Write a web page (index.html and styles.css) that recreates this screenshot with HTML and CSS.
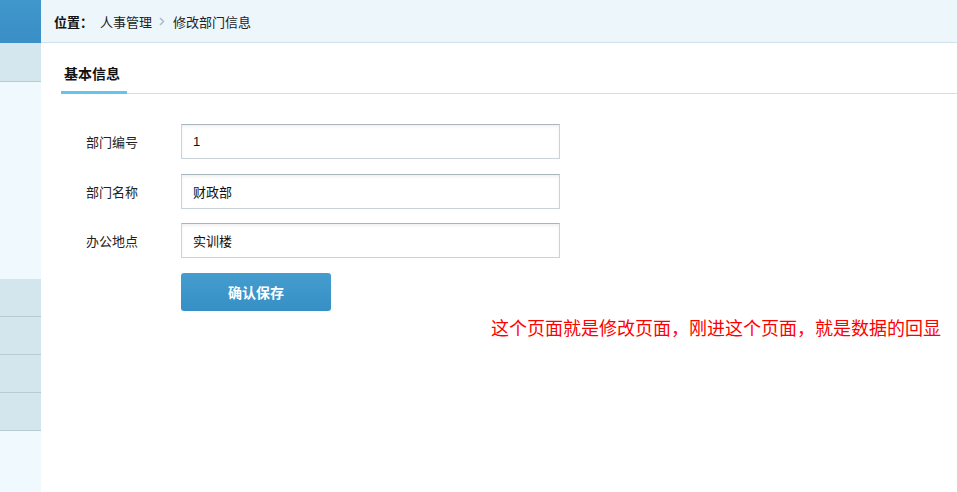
FILE: index.html
```html
<!DOCTYPE html>
<html lang="zh-CN">
<head>
<meta charset="utf-8">
<title>修改部门信息</title>
<link rel="stylesheet" href="styles.css">
</head>
<body>
<div class="page">
  <aside class="sidebar">
    <div class="side-top"></div>
    <div class="side-head"></div>
    <div class="side-space"></div>
    <div class="side-item"></div>
    <div class="side-item"></div>
    <div class="side-item"></div>
    <div class="side-item"></div>
  </aside>
  <main class="main">
    <div class="place">
      <span class="place-label">位置：</span>
      <span class="crumb">人事管理</span>
      <svg class="sep" width="6" height="9" viewBox="0 0 6 9"><path d="M1 1 L4.5 4.5 L1 8" fill="none" stroke="#a9bcc8" stroke-width="1.5"/></svg>
      <span class="crumb">修改部门信息</span>
    </div>
    <div class="tabbar">
      <span class="tab">基本信息</span>
    </div>
    <form class="form">
      <label class="label">部门编号</label>
      <input class="field" type="text" value="1">
      <label class="label">部门名称</label>
      <input class="field" type="text" value="财政部">
      <label class="label">办公地点</label>
      <input class="field" type="text" value="实训楼">
      <span></span>
      <button class="btn" type="button">确认保存</button>
    </form>
    <p class="note">这个页面就是修改页面，刚进这个页面，就是数据的回显</p>
  </main>
</div>
</body>
</html>
```

FILE: styles.css
```css
html, body {
  margin: 0;
  padding: 0;
  background: #fff;
  font-family: "Liberation Sans", Arial, "Noto Sans CJK SC", sans-serif;
  font-size: 13px;
  color: #222;
}
.page {
  display: flex;
  min-height: 492px;
}
.sidebar {
  width: 41px;
  flex: none;
  background: #f0f9fd;
  display: flex;
  flex-direction: column;
}
.side-top {
  height: 43px;
  background: linear-gradient(#3f97cb, #3a8fc6);
}
.side-head {
  height: 38px;
  background: #d4e6ee;
  border-bottom: 1px solid #b9cad3;
}
.side-space {
  height: 197px;
}
.side-item {
  height: 37px;
  background: #d3e6ee;
  border-bottom: 1px solid #b8cad2;
}
.main {
  flex: 1;
  min-width: 0;
}
.place {
  height: 42px;
  background: #ecf6fb;
  border-bottom: 1px solid #d3e2ea;
  display: flex;
  align-items: center;
  padding-left: 13px;
  color: #222;
}
.place-label {
  font-weight: bold;
  color: #111;
  margin-right: 7px;
}
.sep {
  margin: 0 8px 0 7px;
}
.tabbar {
  margin: 0 0 0 20px;
  border-bottom: 1px solid #d5e0e6;
  box-sizing: border-box;
  display: flex;
  align-items: flex-end;
  height: 51px;
}
.tab {
  display: block;
  font-size: 14px;
  font-weight: bold;
  color: #111;
  padding: 0 0 0 3px;
  width: 66px;
  line-height: 18px;
  white-space: nowrap;
  border-bottom: 3px solid #64c5ec;
  margin-bottom: -1px;
  box-sizing: border-box;
  height: 29px;
}
.form {
  display: grid;
  grid-template-columns: 95px 379px;
  row-gap: 14.5px;
  margin: 30px 0 0 45px;
  align-items: center;
}
.label {
  font-size: 13px;
  color: #222;
}
.field {
  height: 35px;
  box-sizing: border-box;
  border: 1px solid #c9d4da;
  border-top-color: #a8b5bc;
  box-shadow: inset 0 2px 3px rgba(0,0,0,0.06);
  padding: 0 11px;
  font-family: "Liberation Sans", Arial, "Noto Sans CJK SC", sans-serif;
  font-size: 13px;
  color: #111;
  margin: 0;
  outline: none;
  background: #fff;
}
.btn {
  width: 150px;
  height: 38px;
  border: 0;
  border-radius: 3px;
  background: linear-gradient(#459cce, #3690c5);
  color: #fff;
  font-family: "Liberation Sans", Arial, "Noto Sans CJK SC", sans-serif;
  font-size: 14px;
  font-weight: bold;
  padding: 0;
  margin: 0;
}
.note {
  margin: 8px 0 0 450px;
  font-size: 18px;
  line-height: 20px;
  color: #ff0000;
  white-space: nowrap;
}
```
